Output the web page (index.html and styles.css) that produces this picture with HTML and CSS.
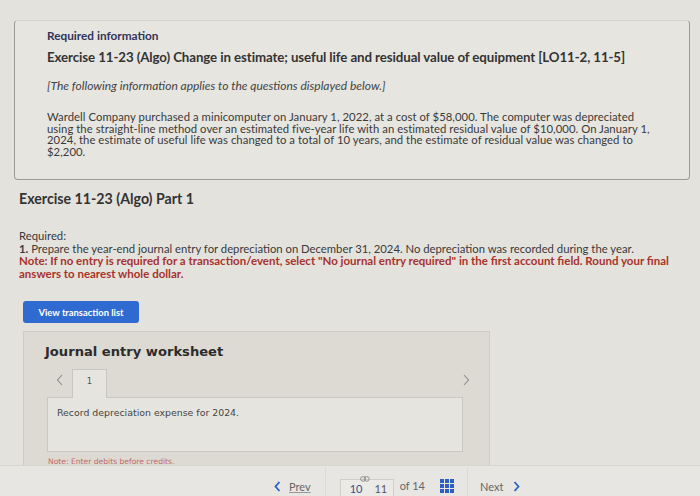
FILE: index.html
```html
<!DOCTYPE html>
<html>
<head>
<meta charset="utf-8">
<link rel="stylesheet" href="styles.css">
</head>
<body>
<div class="info">
  <div class="req-label">Required information</div>
  <div class="ex-title">Exercise 11-23 (Algo) Change in estimate; useful life and residual value of equipment [LO11-2, 11-5]</div>
  <div class="applies">[The following information applies to the questions displayed below.]</div>
  <p class="para">Wardell Company purchased a minicomputer on January 1, 2022, at a cost of $58,000. The computer was depreciated<br>using the straight-line method over an estimated five-year life with an estimated residual value of $10,000. On January 1,<br>2024, the estimate of useful life was changed to a total of 10 years, and the estimate of residual value was changed to<br>$2,200.</p>
</div>

<h2 class="part-title">Exercise 11-23 (Algo) Part 1</h2>

<div class="required">
  <div>Required:</div>
  <div><b>1.</b> Prepare the year-end journal entry for depreciation on December 31, 2024. No depreciation was recorded during the year.</div>
  <div class="note">Note: If no entry is required for a transaction/event, select "No journal entry required" in the first account field. Round your final<br>answers to nearest whole dollar.</div>
</div>

<button class="view-btn">View transaction list</button>

<div class="ws">
  <div class="ws-title">Journal entry worksheet</div>
  <div class="tab-row">
    <span class="chev chev-left">
      <svg width="7" height="12" viewBox="0 0 7 12"><path d="M6 1 L1.5 6 L6 11" fill="none" stroke="#8d8b87" stroke-width="1.1"/></svg>
    </span>
    <span class="tab">1</span>
    <span class="chev chev-right">
      <svg width="7" height="12" viewBox="0 0 7 12"><path d="M1 1 L5.5 6 L1 11" fill="none" stroke="#8d8b87" stroke-width="1.1"/></svg>
    </span>
  </div>
  <div class="entry-box">Record depreciation expense for 2024.</div>
  <div class="ws-note">Note: Enter debits before credits.</div>
</div>

<nav class="pager">
  <span class="pg-prev">
    <svg width="7" height="11" viewBox="0 0 7 11"><path d="M5.5 1 L1.5 5.5 L5.5 10" fill="none" stroke="#2c5fc4" stroke-width="1.8"/></svg>
    <span class="pg-link">Prev</span>
  </span>
  <span class="pg-div"></span>
  <span class="pg-box">
    <svg class="pg-chain" width="10" height="6" viewBox="0 0 10 6"><rect x="0.6" y="0.6" width="5" height="4.6" rx="2.3" fill="none" stroke="#8a8884" stroke-width="0.9"/><rect x="4.2" y="0.6" width="5" height="4.6" rx="2.3" fill="none" stroke="#8a8884" stroke-width="0.9"/></svg>
    <span class="pg-cur">10</span>
    <span class="pg-next-num">11</span>
  </span>
  <span class="pg-of">of 14</span>
  <svg class="pg-grid" width="14" height="14" viewBox="0 0 14 14" fill="#2c5fc4">
    <rect x="0" y="0" width="4" height="4"/><rect x="5" y="0" width="4" height="4"/><rect x="10" y="0" width="4" height="4"/>
    <rect x="0" y="5" width="4" height="4"/><rect x="5" y="5" width="4" height="4"/><rect x="10" y="5" width="4" height="4"/>
    <rect x="0" y="10" width="4" height="4"/><rect x="5" y="10" width="4" height="4"/><rect x="10" y="10" width="4" height="4"/>
  </svg>
  <span class="pg-div pg-div2"></span>
  <span class="pg-nextbtn">
    <span>Next</span>
    <svg width="7" height="11" viewBox="0 0 7 11"><path d="M1.5 1 L5.5 5.5 L1.5 10" fill="none" stroke="#2c5fc4" stroke-width="1.8"/></svg>
  </span>
</nav>
</body>
</html>
```
FILE: styles.css
```css
html, body {
  margin: 0;
  padding: 0;
}
body {
  background: #e4e2dd;
  font-family: Lato, "Open Sans", sans-serif;
  color: #3a3a3a;
  padding-top: 20px;
  height: 476px;
  overflow: hidden;
}
.info {
  margin-left: 14px;
  width: 676px;
  height: 160px;
  box-sizing: border-box;
  border: 1px solid #9c9a96;
  border-top-color: #d6d4cf;
  border-radius: 4px;
  background: #e7e5e0;
  padding: 8px 0 0 32px;
}
.req-label {
  font-size: 11.8px;
  line-height: 14px;
  font-weight: 700;
  color: #30355a;
}
.ex-title {
  margin-top: 6px;
  font-size: 13.3px;
  line-height: 16px;
  font-weight: 700;
  color: #333;
  letter-spacing: -0.1px;
}
.applies {
  margin-top: 14px;
  font-size: 12px;
  line-height: 14px;
  font-style: italic;
  color: #444;
}
.para {
  margin: 18px 0 0;
  font-size: 11.3px;
  line-height: 11.6px;
  letter-spacing: 0.05px;
  color: #3a3a3a;
  white-space: nowrap;
}
.part-title {
  margin: 11px 0 0 19px;
  font-size: 14.2px;
  line-height: 16px;
  font-weight: 700;
  color: #333;
}
.required {
  margin: 23px 0 0 19px;
  font-size: 11.3px;
  line-height: 12.5px;
  color: #3a3a3a;
  white-space: nowrap;
}
.note {
  color: #a8322c;
  font-weight: 700;
  font-size: 11.5px;
}
.view-btn {
  display: block;
  margin: 21px 0 0 23px;
  width: 116px;
  height: 22px;
  border: none;
  border-radius: 3px;
  background: #2f6ad0;
  color: #fff;
  font-family: Lato, sans-serif;
  font-weight: 700;
  font-size: 9.4px;
  padding: 0;
}
.ws {
  margin: 8px 0 0 23px;
  width: 467px;
  height: 160px;
  box-sizing: border-box;
  border: 1px solid #cfccc5;
  background: #dddad3;
  padding: 12px 0 0 21px;
}
.ws-title {
  font-family: "DejaVu Sans", Verdana, sans-serif;
  font-weight: 700;
  font-size: 13.1px;
  line-height: 16px;
  color: #2c2c2c;
}
.tab-row {
  display: flex;
  align-items: stretch;
  margin: 9px 0 0 2px;
  height: 28px;
  width: 423px;
  position: relative;
}
.chev {
  display: flex;
  align-items: center;
  height: 22px;
}
.chev-left {
  width: 25px;
  justify-content: center;
}
.chev-right {
  margin-left: auto;
}
.tab {
  width: 35px;
  box-sizing: border-box;
  border: 1px solid #c9c6bf;
  border-bottom: none;
  background: #e6e4de;
  margin-bottom: -1px;
  position: relative;
  z-index: 1;
  text-align: center;
  font-family: "DejaVu Sans", sans-serif;
  font-size: 8.5px;
  line-height: 22px;
  color: #555;
}
.entry-box {
  margin-left: 2px;
  width: 416px;
  height: 55px;
  box-sizing: border-box;
  border: 1px solid #cbc8c1;
  background: #e6e4de;
  padding: 9px 0 0 9px;
  font-family: "DejaVu Sans", sans-serif;
  font-size: 9.4px;
  line-height: 12px;
  color: #444;
}
.ws-note {
  margin: 5px 0 0 3px;
  font-family: "DejaVu Sans", sans-serif;
  font-size: 7.6px;
  line-height: 10px;
  color: #c26a6c;
}
.pager {
  position: fixed;
  left: 0;
  right: 0;
  bottom: 0;
  height: 30px;
  background: #e8e6e2;
  border-top: 1px solid #d7d5d0;
  display: flex;
  align-items: flex-end;
  padding-left: 274px;
  font-family: Lato, sans-serif;
  font-size: 11px;
  color: #666;
}
.pg-prev, .pg-nextbtn {
  display: flex;
  align-items: center;
  gap: 8px;
  height: 18px;
  margin-bottom: 1px;
}
.pg-link {
  text-decoration: underline;
  text-decoration-color: #999;
}
.pg-div {
  width: 1px;
  height: 29px;
  background: #dcdad5;
  margin: 0 14px 0 14px;
}
.pg-box {
  position: relative;
  width: 54px;
  height: 17px;
  box-sizing: border-box;
  border: 1px solid #d0cec9;
  border-bottom: none;
  background: #eceae6;
  display: flex;
  align-items: center;
  padding-left: 9px;
  gap: 12px;
  color: #555;
}
.pg-cur {
  color: #2f4f94;
}
.pg-chain {
  position: absolute;
  left: 19px;
  top: -4px;
}
.pg-of {
  margin: 0 0 1px 6px;
  height: 18px;
  line-height: 18px;
}
.pg-grid {
  margin: 0 0 3px 15px;
}
.pg-div2 {
  margin-left: 13px;
  margin-right: 12px;
}
.pg-nextbtn {
  gap: 10px;
}
```
